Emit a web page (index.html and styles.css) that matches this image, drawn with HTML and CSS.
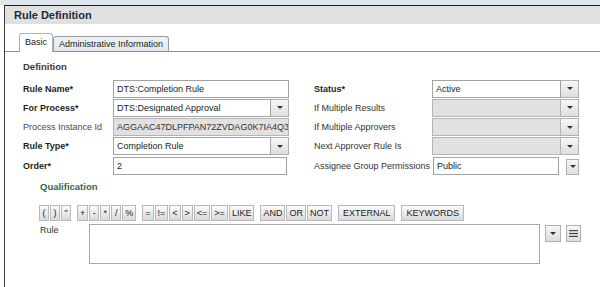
FILE: index.html
```
<!DOCTYPE html>
<html lang="en">
<head>
    <meta charset="UTF-8">
    <title>Rule Definition</title>
    <link rel="stylesheet" href="styles.css">
</head>
<body>
    <div class="top-strip"></div>
    <div class="panel">
        <div class="panel-header">
            <h1>Rule Definition</h1>
        </div>
        <div class="panel-body">
            <div class="tabs">
                <div class="tab active">Basic</div>
                <div class="tab">Administrative Information</div>
            </div>

            <div class="section-title">Definition</div>

            <div class="form-grid">
                <!-- row 1 -->
                <div class="label req">Rule Name*</div>
                <div class="field"><div class="text-box">DTS:Completion Rule</div></div>
                <div class="spacer"></div>
                <div class="label req">Status*</div>
                <div class="field select"><div class="text-box">Active</div><div class="drop-btn"><span class="caret"></span></div></div>

                <!-- row 2 -->
                <div class="label req">For Process*</div>
                <div class="field select"><div class="text-box">DTS:Designated Approval</div><div class="drop-btn"><span class="caret"></span></div></div>
                <div class="spacer"></div>
                <div class="label">If Multiple Results</div>
                <div class="field select disabled"><div class="text-box"></div><div class="drop-btn"><span class="caret"></span></div></div>

                <!-- row 3 -->
                <div class="label muted">Process Instance Id</div>
                <div class="field disabled"><div class="text-box">AGGAAC47DLPFPAN72ZVDAG0K7IA4Q3</div></div>
                <div class="spacer"></div>
                <div class="label">If Multiple Approvers</div>
                <div class="field select disabled"><div class="text-box"></div><div class="drop-btn"><span class="caret"></span></div></div>

                <!-- row 4 -->
                <div class="label req">Rule Type*</div>
                <div class="field select"><div class="text-box">Completion Rule</div><div class="drop-btn"><span class="caret"></span></div></div>
                <div class="spacer"></div>
                <div class="label">Next Approver Rule Is</div>
                <div class="field select disabled"><div class="text-box"></div><div class="drop-btn"><span class="caret"></span></div></div>

                <!-- row 5 -->
                <div class="label req">Order*</div>
                <div class="field short"><div class="text-box">2</div></div>
                <div class="spacer"></div>
                <div class="label">Assignee Group Permissions</div>
                <div class="field select split"><div class="text-box">Public</div><div class="drop-btn"><span class="caret"></span></div></div>
            </div>

            <div class="qualification">
                <div class="qual-title">Qualification</div>

                <div class="ops">
                    <div class="op-group">
                        <span class="op">(</span><span class="op">)</span><span class="op">"</span>
                    </div>
                    <div class="op-group">
                        <span class="op">+</span><span class="op">-</span><span class="op">*</span><span class="op">/</span><span class="op">%</span>
                    </div>
                    <div class="op-group">
                        <span class="op">=</span><span class="op">!=</span><span class="op">&lt;</span><span class="op">&gt;</span><span class="op">&lt;=</span><span class="op">&gt;=</span><span class="op">LIKE</span>
                    </div>
                    <div class="op-group">
                        <span class="op">AND</span><span class="op">OR</span><span class="op">NOT</span>
                    </div>
                    <div class="op-group">
                        <span class="op wide">EXTERNAL</span>
                    </div>
                    <div class="op-group">
                        <span class="op wide">KEYWORDS</span>
                    </div>
                </div>

                <div class="rule-row">
                    <div class="rule-label">Rule</div>
                    <div class="rule-box"></div>
                    <div class="side-btn"><span class="caret"></span></div>
                    <div class="side-btn menu">
                        <svg width="9" height="7" viewBox="0 0 9 7">
                            <rect x="0" y="0" width="9" height="1.2" fill="#444"/>
                            <rect x="0" y="2.9" width="9" height="1.2" fill="#444"/>
                            <rect x="0" y="5.8" width="9" height="1.2" fill="#444"/>
                        </svg>
                    </div>
                </div>
            </div>
        </div>
    </div>
</body>
</html>
```

FILE: styles.css
```
* {
    margin: 0;
    padding: 0;
    box-sizing: border-box;
}

body {
    font-family: "Liberation Sans", Arial, sans-serif;
    font-size: 9px;
    color: #222;
    background-color: #fff;
    width: 600px;
    height: 287px;
    overflow: hidden;
}

.top-strip {
    height: 5px;
    background-color: #dde6ec;
}

.panel {
    margin-left: 4px;
    height: 282px;
    border-left: 1px solid #3c3c3c;
    border-top: 1px solid #1e1e1e;
    background-color: #fff;
}

.panel-header {
    height: 18px;
    background-color: #e0e0e0;
    padding-left: 9px;
    display: flex;
    align-items: center;
}

.panel-header h1 {
    font-size: 11px;
    font-weight: 700;
    color: #1d2b3c;
}

/* tabs */
.tabs {
    margin-top: 9px;
    padding-left: 14px;
    display: flex;
    align-items: flex-end;
    border-bottom: 1px solid #8e8e8e;
    height: 19px;
}

.tab {
    height: 15px;
    line-height: 14px;
    padding: 0 5px;
    border: 1px solid #9a9a9a;
    border-bottom: none;
    border-radius: 3px 3px 0 0;
    background: linear-gradient(#edf2f6, #e2e9ef);
    color: #222;
}

.tab.active {
    height: 19px;
    line-height: 16px;
    padding: 0 5px;
    margin-bottom: -1px;
    background: #fff;
    border-color: #a8b4bf;
}

.section-title {
    margin-top: 9px;
    padding-left: 18px;
    height: 12px;
    line-height: 12px;
    font-size: 9.5px;
    font-weight: 700;
    color: #3a3a3a;
}

/* definition grid */
.form-grid {
    margin-top: 6px;
    padding-left: 18px;
    display: grid;
    grid-template-columns: 90px 176px 25px 118px 147px;
    grid-auto-rows: 19.25px;
    align-items: center;
}

.label {
    color: #333;
    white-space: nowrap;
}

.label.req {
    font-weight: 700;
    color: #1e1e1e;
}

.label.muted {
    color: #4a4a4a;
}

.field {
    display: flex;
    height: 18px;
}

.text-box {
    flex: 1;
    min-width: 0;
    height: 18px;
    line-height: 16px;
    padding: 0 3px;
    border: 1px solid #a3a3a3;
    background-color: #fff;
    white-space: nowrap;
    overflow: hidden;
    color: #222;
}

.field.short .text-box {
    flex: none;
    width: 174px;
}

.field.disabled .text-box {
    background-color: #e1e1e1;
    border-color: #b4b4b4;
    color: #333;
}

.drop-btn {
    width: 18px;
    height: 18px;
    border: 1px solid #b0b0b0;
    border-left: none;
    background: linear-gradient(#f7f7f7, #dedede);
    display: flex;
    align-items: center;
    justify-content: center;
}

.field.split .text-box {
    flex: none;
    width: 126px;
    margin-left: 1px;
}

.field.split .drop-btn {
    margin-left: 7px;
    width: 14px;
    border-left: 1px solid #b0b0b0;
    height: 16px;
    margin-top: 2px;
}

.caret {
    width: 0;
    height: 0;
    border-left: 3px solid transparent;
    border-right: 3px solid transparent;
    border-top: 3px solid #333;
}

/* qualification */
.qualification {
    padding-left: 35px;
}

.qual-title {
    margin-top: 6px;
    height: 12px;
    line-height: 12px;
    font-weight: 700;
    font-size: 9.5px;
    color: #2f6a42;
}

.ops {
    margin-top: 12px;
    margin-left: -1px;
    display: flex;
    gap: 6px;
}

.op-group {
    display: flex;
    gap: 1px;
}

.op {
    height: 16px;
    line-height: 14px;
    padding: 0 2px;
    min-width: 10px;
    text-align: center;
    border: 1px solid #b8b8b8;
    background: linear-gradient(#fafafa, #dadada);
    color: #222;
}

.op.wide {
    padding: 0 4px;
}

.rule-row {
    margin-top: 3px;
    display: flex;
    align-items: flex-start;
}

.rule-label {
    width: 49px;
    line-height: 12px;
    color: #333;
}

.rule-box {
    width: 451px;
    height: 40px;
    border: 1px solid #a8a8a8;
    background-color: #fff;
}

.side-btn {
    margin-top: 1px;
    margin-left: 5px;
    width: 16px;
    height: 17px;
    border: 1px solid #b0b0b0;
    background: linear-gradient(#f7f7f7, #dcdcdc);
    display: flex;
    align-items: center;
    justify-content: center;
}

.side-btn.menu {
    width: 15px;
}
```
